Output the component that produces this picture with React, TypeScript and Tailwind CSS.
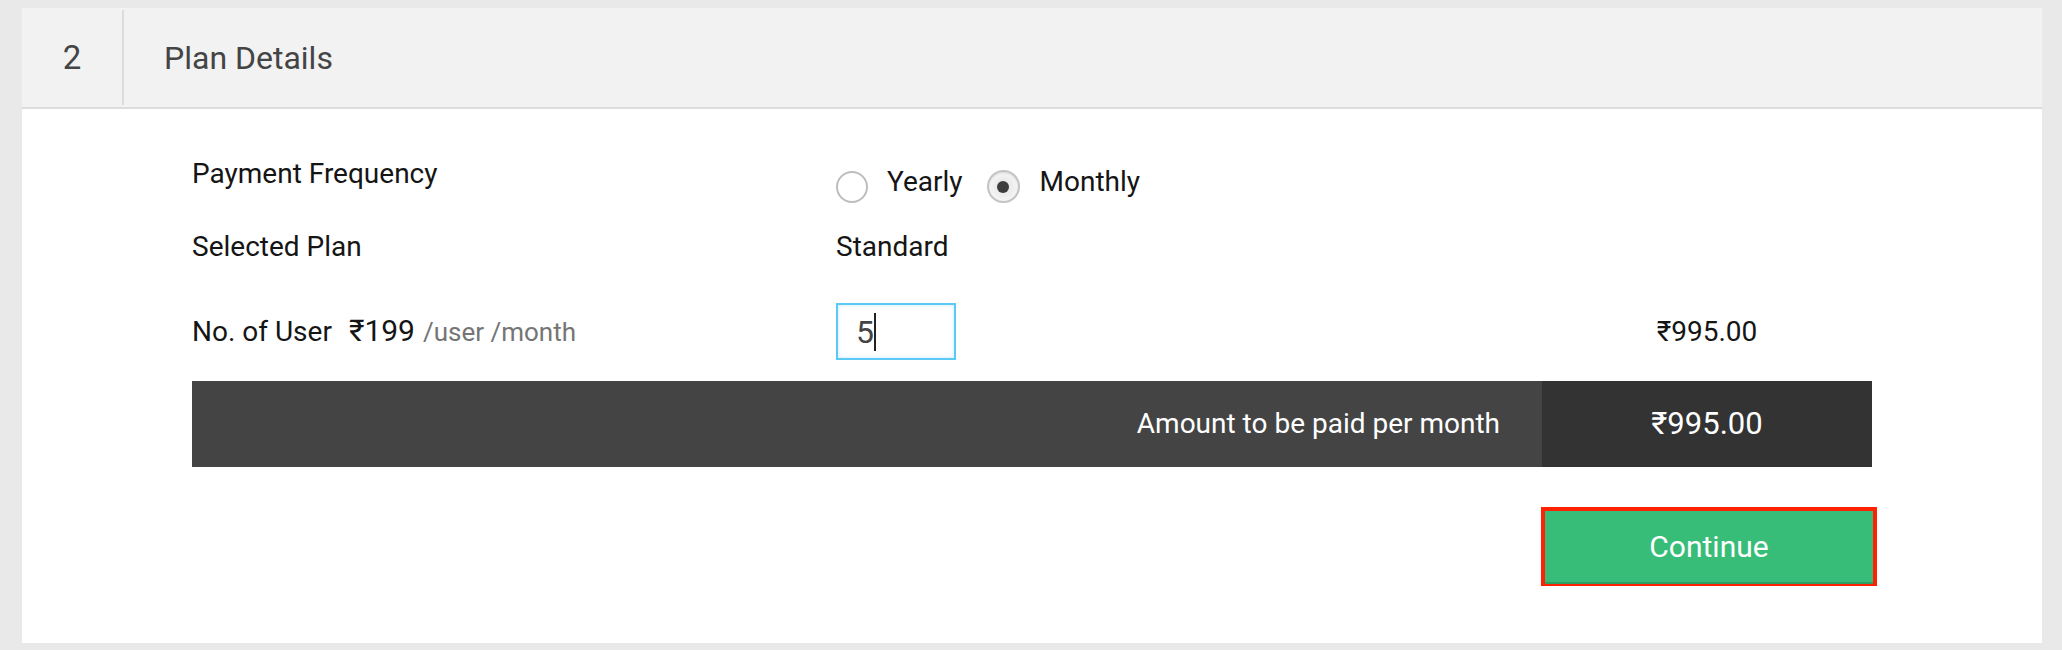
import React from "react";

const Radio = ({ checked }: { checked?: boolean }) => {
  if (!checked) {
    return <div className="mt-[9px] w-[32px] h-[32px] rounded-full border-2 border-[#bdbdbd] bg-white" />;
  }
  return (
    <div className="mt-[8px] w-[33px] h-[33px] rounded-full border-2 border-[#c4c4c4] bg-[radial-gradient(circle,#e2e2e2_0%,#f1f1f1_55%,#ffffff_100%)] shadow-[inset_0_1px_2px_rgba(0,0,0,0.12)] flex items-center justify-center">
      <div className="w-[12px] h-[12px] rounded-full bg-[#3d3d3d]" />
    </div>
  );
};

export default function App() {
  return (
    <div className="min-h-[650px] bg-[#e9e9e9] pt-[8px] pl-[22px] pr-[20px] pb-[8px] font-['Roboto','Noto_Sans',sans-serif]">
      <div className="bg-white">
        {/* Header */}
        <div className="flex h-[101px] bg-[#f2f2f2] border-b-2 border-[#dcdcdc]">
          <div className="w-[100px] flex items-center justify-center text-[33px] text-[#444]">2</div>
          <div className="w-[2px] my-[2px] bg-[#dcdcdc]" />
          <div className="pl-[40px] flex items-center text-[32px] text-[#444]">Plan Details</div>
        </div>

        {/* Body */}
        <div className="pt-[45px] px-[170px] pb-[57px] text-[28px] text-[#151515]">
          {/* Payment frequency */}
          <div className="grid grid-cols-[644px_706px_330px]">
            <div className="leading-[40px]">Payment Frequency</div>
            <div className="flex items-start pt-[8px]">
              <Radio />
              <span className="ml-[19px] leading-[40px]">Yearly</span>
              <div className="ml-[24px]">
                <Radio checked />
              </div>
              <span className="ml-[20px] leading-[40px]">Monthly</span>
            </div>
            <div />
          </div>

          {/* Selected plan */}
          <div className="grid grid-cols-[644px_706px_330px] mt-[24px]">
            <div className="leading-[40px]">Selected Plan</div>
            <div className="leading-[40px]">Standard</div>
            <div />
          </div>

          {/* Users */}
          <div className="grid grid-cols-[644px_706px_330px] items-center mt-[36px]">
            <div className="flex items-baseline leading-[40px]">
              <span>No. of User</span>
              <span className="ml-[17px] text-[30px]">₹199</span>
              <span className="ml-[8px] text-[26px] text-[#757575]">/user /month</span>
            </div>
            <div>
              <div className="w-[120px] h-[57px] border-2 border-[#5cc8f5] shadow-[inset_0_0_4px_rgba(92,200,245,0.35)] flex items-center pl-[18px] text-[32px] text-[#444]">
                <span>5</span>
                <span className="w-[2px] h-[38px] bg-[#222]" />
              </div>
            </div>
            <div className="text-center leading-[40px]">₹995.00</div>
          </div>

          {/* Total bar */}
          <div className="flex h-[86px] mt-[21px] text-white">
            <div className="flex-1 bg-[#444] flex items-center justify-end pr-[42px]">Amount to be paid per month</div>
            <div className="w-[330px] bg-[#333] flex items-center justify-center text-[31px]">₹995.00</div>
          </div>

          {/* Continue */}
          <div className="flex justify-end mt-[40px]">
            <div className="-mr-[5px] w-[336px] h-[79px] border-4 border-[#ff2200]">
              <button className="w-full h-full bg-[#38bd78] text-white text-[30px] shadow-[0_2px_0_#2c9e62]">
                Continue
              </button>
            </div>
          </div>
        </div>
      </div>
    </div>
  );
}
